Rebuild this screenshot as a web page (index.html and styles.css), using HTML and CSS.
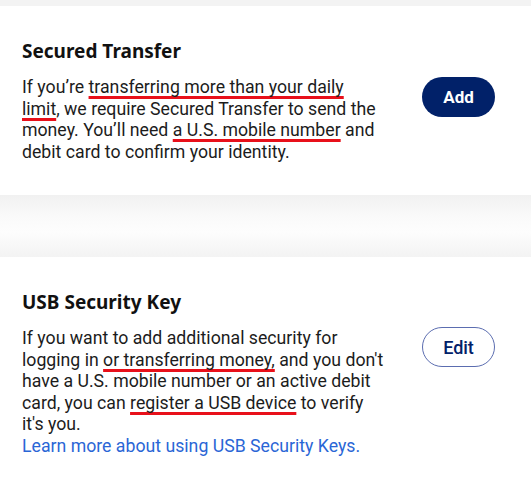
FILE: index.html
```html
<!DOCTYPE html>
<html>
<head>
	<title>Security settings</title>
	<link rel="stylesheet" href="styles.css">
</head>
<body>
<div class="band-top"></div>

<div class="card first">
	<div class="info">
		<h2>Secured Transfer</h2>
		<p>If you’re <span class="mark">transferring more than your daily</span> <span class="mark">limit</span>, we require Secured Transfer to send the money. You’ll need <span class="mark">a U.S. mobile number</span> and debit card to confirm your identity.</p>
	</div>
	<div class="action">
		<button class="btn solid">Add</button>
	</div>
</div>

<div class="band-gap"></div>

<div class="card second">
	<div class="info">
		<h2>USB Security Key</h2>
		<p>If you want to add additional security for logging in <span class="mark">or transferring money,</span> and you don't have a U.S. mobile number or an active debit card, you can <span class="mark">register a USB device</span> to verify it's you.</p>
		<a class="learn" href="#">Learn more about using USB Security Keys.</a>
	</div>
	<div class="action">
		<button class="btn outline">Edit</button>
	</div>
</div>
</body>
</html>
```

FILE: styles.css
```css
body {
	margin: 0;
	background: #fff;
	font-family: Roboto, "Liberation Sans", sans-serif;
	color: #1c1c1c;
}

.band-top {
	height: 6px;
	background: #f3f3f3;
}

.band-gap {
	height: 62px;
	background: linear-gradient(#f1f1f1, #fafafa 35%, #fdfdfd 60%, #f3f3f3);
}

.card {
	display: flex;
	align-items: flex-start;
	padding: 0 22px;
}

.card.first {
	padding-top: 33px;
	height: 156px;
}

.card.second {
	padding-top: 33px;
}

.info {
	width: 362px;
}

h2 {
	font-family: "Noto Sans", "Open Sans", sans-serif;
	font-weight: 700;
	font-size: 19px;
	line-height: 24px;
	margin: 0 0 14px;
	color: #111;
}

p {
	margin: 0;
	font-size: 17.7px;
	line-height: 21.5px;
}

.mark {
	text-decoration: underline;
	text-decoration-color: #e8101a;
	text-decoration-thickness: 2.5px;
	text-underline-offset: 3px;
	text-decoration-skip-ink: none;
}

.learn {
	display: block;
	font-size: 17.7px;
	line-height: 21.5px;
	color: #2a66d6;
	text-decoration: none;
}

.action {
	margin-left: auto;
	padding-right: 14px;
}

.first .action {
	padding-top: 38px;
}

.second .action {
	padding-top: 37px;
}

.btn {
	width: 73px;
	height: 40px;
	border-radius: 20px;
	font-family: Roboto, "Liberation Sans", sans-serif;
	cursor: pointer;
}

.btn.solid {
	background: #012169;
	color: #fff;
	border: none;
	font-size: 17px;
	font-weight: 700;
}

.btn.outline {
	background: #fff;
	color: #012169;
	border: 1.5px solid #5b6db0;
	font-size: 18px;
	font-weight: 500;
}
```
